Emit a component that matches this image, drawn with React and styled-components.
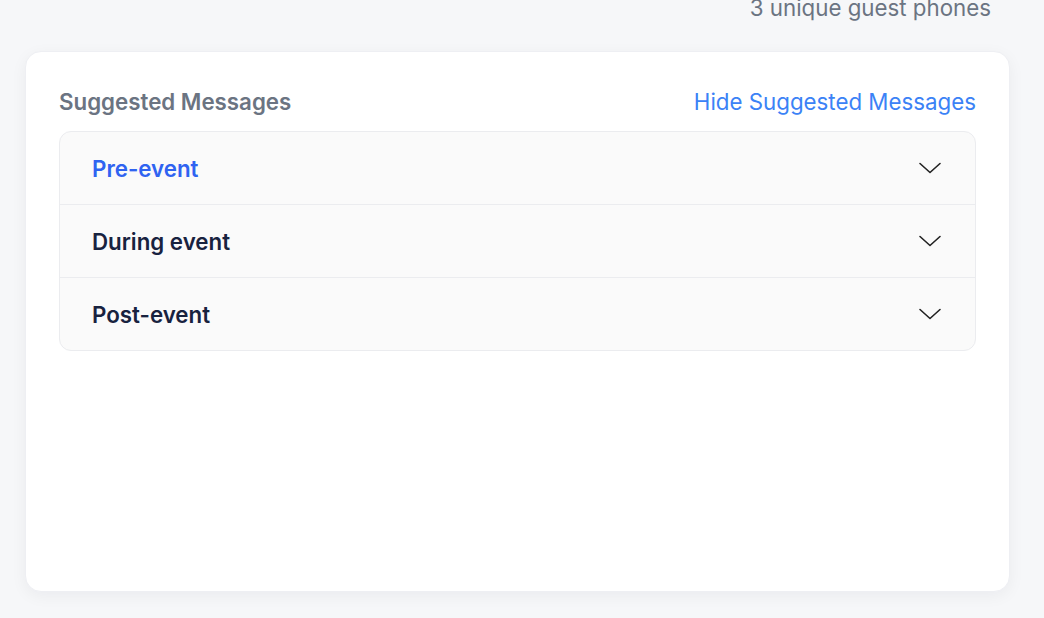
import styled, { createGlobalStyle } from "styled-components";

const GlobalStyle = createGlobalStyle`
  html, body {
    margin: 0;
    padding: 0;
    background: #f6f7f9;
    font-family: Inter, "Noto Sans", sans-serif;
  }
`;

const Page = styled.div`
  width: 1044px;
  height: 618px;
  overflow: hidden;
  display: flex;
  flex-direction: column;
`;

const TopBar = styled.div`
  height: 23px;
  display: flex;
  align-items: flex-end;
  justify-content: flex-end;
  padding-right: 53px;
  margin-bottom: 28px;
`;

const GuestCount = styled.span`
  font-size: 22.3px;
  line-height: 30px;
  color: #6b7482;
`;

const Card = styled.div`
  margin-left: 25px;
  width: 985px;
  height: 541px;
  box-sizing: border-box;
  background: #ffffff;
  border: 1px solid #eeeff3;
  border-radius: 16px;
  box-shadow: 0 4px 16px rgba(20, 24, 40, 0.05);
  padding: 35px 33px;
`;

const CardHeader = styled.div`
  display: flex;
  justify-content: space-between;
  align-items: center;
  margin-bottom: 14px;
`;

const Title = styled.h2`
  margin: 0;
  font-size: 22.3px;
  line-height: 30px;
  font-weight: 600;
  color: #6b7482;
`;

const HideLink = styled.button`
  background: transparent;
  border: 0;
  padding: 0;
  font-family: inherit;
  font-size: 22.3px;
  line-height: 30px;
  color: #3b82f6;
  cursor: pointer;
`;

const Accordion = styled.div`
  border: 1px solid #ebecef;
  border-radius: 12px;
  background: #fafafa;
  overflow: hidden;
`;

const Row = styled.div`
  height: 72px;
  display: flex;
  align-items: center;
  justify-content: space-between;
  padding: 0 33px 0 32px;
  & + & {
    border-top: 1px solid #ebecef;
  }
`;

const RowLabel = styled.span`
  font-size: 22.3px;
  font-weight: 600;
  color: ${(p) => (p.$active ? "#2f63f1" : "#18223f")};
`;

const Chevron = () => (
  <svg width="24" height="24" viewBox="0 0 24 24" fill="none" stroke="#222" strokeWidth="1.6" strokeLinecap="round" strokeLinejoin="round">
    <path d="M2 7.5 L12 16.5 L22 7.5" />
  </svg>
);

const sections = ["Pre-event", "During event", "Post-event"];

export default function App() {
  return (
    <Page>
      <GlobalStyle />
      <TopBar>
        <GuestCount>3 unique guest phones</GuestCount>
      </TopBar>
      <Card>
        <CardHeader>
          <Title>Suggested Messages</Title>
          <HideLink>Hide Suggested Messages</HideLink>
        </CardHeader>
        <Accordion>
          {sections.map((s, i) => (
            <Row key={s}>
              <RowLabel $active={i === 0}>{s}</RowLabel>
              <Chevron />
            </Row>
          ))}
        </Accordion>
      </Card>
    </Page>
  );
}
